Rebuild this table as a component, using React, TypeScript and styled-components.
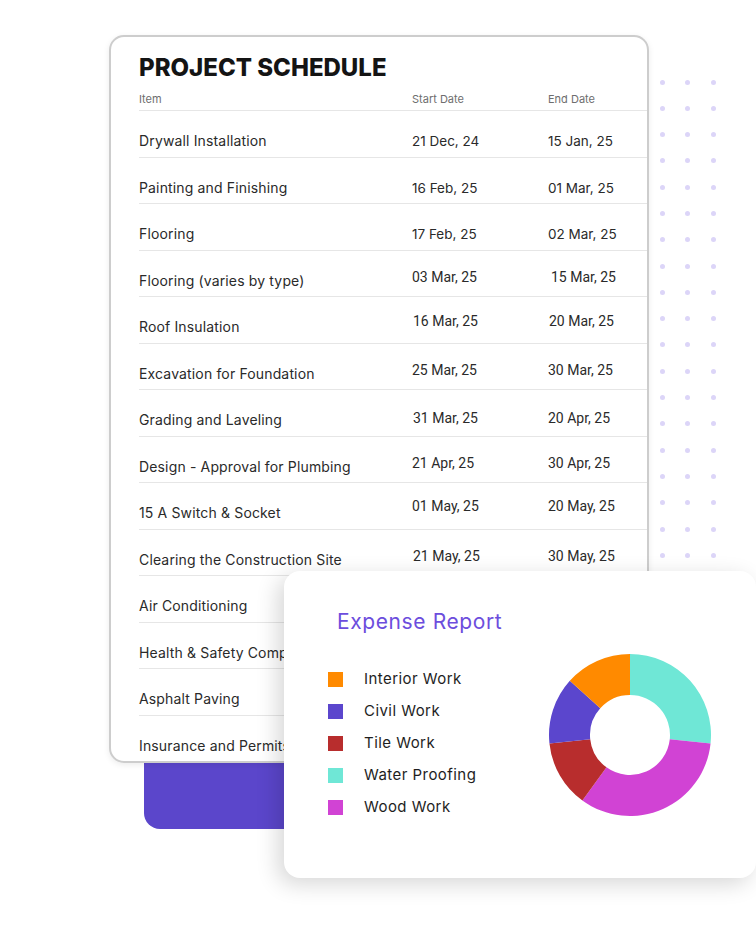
import React from 'react';
import styled, { createGlobalStyle } from 'styled-components';

const colors = {
   INK: '#141414',
   TEXT: '#2a2a2a',
   MUTED: '#6e6e6e',
   LINE: '#e6e6e6',
   BORDER: '#cdcdcd',
   DOT: '#dcd5f8',
   VIOLET: '#5b46cb',
   TITLE: '#6c4ddd',
};

type Row = {
   item: string;
   start: string;
   end: string;
   pasted?: boolean;
   lift?: number;
   startNudge?: number;
   endNudge?: number;
};

const rows: Row[] = [
   { item: 'Drywall Installation', start: '21 Dec, 24', end: '15 Jan, 25' },
   { item: 'Painting and Finishing', start: '16 Feb, 25', end: '01 Mar, 25' },
   { item: 'Flooring', start: '17 Feb, 25', end: '02 Mar, 25' },
   { item: 'Flooring (varies by type)', start: '03 Mar, 25', end: '15 Mar, 25', pasted: true, lift: 4, startNudge: -2, endNudge: 3 },
   { item: 'Roof Insulation', start: '16 Mar, 25', end: '20 Mar, 25', pasted: true, lift: 6, startNudge: 1, endNudge: 1 },
   { item: 'Excavation for Foundation', start: '25 Mar, 25', end: '30 Mar, 25', pasted: true, lift: 4, startNudge: -2, endNudge: -1 },
   { item: 'Grading and Laveling', start: '31 Mar, 25', end: '20 Apr, 25', pasted: true, lift: 2, startNudge: 1 },
   { item: 'Design - Approval for Plumbing', start: '21 Apr, 25', end: '30 Apr, 25', pasted: true, lift: 4 },
   { item: '15 A Switch & Socket', start: '01 May, 25', end: '20 May, 25', pasted: true, lift: 7, startNudge: -2, endNudge: -2 },
   { item: 'Clearing the Construction Site', start: '21 May, 25', end: '30 May, 25', pasted: true, lift: 4, startNudge: 1 },
   { item: 'Air Conditioning', start: '', end: '' },
   { item: 'Health & Safety Compliance', start: '', end: '' },
   { item: 'Asphalt Paving', start: '', end: '' },
   { item: 'Insurance and Permits', start: '', end: '' },
];

const expenses = [
   { label: 'Interior Work', color: '#ff8a00' },
   { label: 'Civil Work', color: '#5b46cd' },
   { label: 'Tile Work', color: '#b82d2d' },
   { label: 'Water Proofing', color: '#6fe7d6' },
   { label: 'Wood Work', color: '#d143d4' },
];

// clockwise from 12 o'clock, in 24 degree units
const slices = [
   { units: 4, color: '#6fe7d6' },
   { units: 5, color: '#d143d4' },
   { units: 2, color: '#b82d2d' },
   { units: 2, color: '#5b46cd' },
   { units: 2, color: '#ff8a00' },
];

const GlobalStyle = createGlobalStyle`
   html, body {
      margin: 0;
      padding: 0;
      background: #ffffff;
   }
   body {
      font-family: Inter, 'Liberation Sans', sans-serif;
      -webkit-font-smoothing: antialiased;
   }
   * {
      box-sizing: border-box;
   }
`;

const point = (c: number, rad: number, deg: number) => {
   const a = (deg * Math.PI) / 180;
   return [c + rad * Math.sin(a), c - rad * Math.cos(a)];
};

const slicePath = (c: number, R: number, r: number, a0: number, a1: number) => {
   const large = a1 - a0 > 180 ? 1 : 0;
   const [x0, y0] = point(c, R, a0);
   const [x1, y1] = point(c, R, a1);
   const [x2, y2] = point(c, r, a1);
   const [x3, y3] = point(c, r, a0);
   return `M${x0} ${y0} A${R} ${R} 0 ${large} 1 ${x1} ${y1} L${x2} ${y2} A${r} ${r} 0 ${large} 0 ${x3} ${y3} Z`;
};

const Donut = () => {
   let angle = 0;
   return (
      <svg width="164" height="164" viewBox="0 0 164 164">
         {slices.map((s, i) => {
            const a0 = angle;
            angle += s.units * 24;
            return <path key={i} d={slicePath(82, 81, 40, a0, angle)} fill={s.color} />;
         })}
      </svg>
   );
};

const App = () => {
   return (
      <>
         <GlobalStyle />
         <Stage>
            <Backdrop />
            <ScheduleCard>
               <Title>PROJECT SCHEDULE</Title>
               <HeadRow>
                  <HeadCell>Item</HeadCell>
                  <HeadCell>Start Date</HeadCell>
                  <HeadCell>End Date</HeadCell>
               </HeadRow>
               {rows.map((row, index) => (
                  <BodyRow key={index} $last={index === rows.length - 1}>
                     <ItemCell>{row.item}</ItemCell>
                     <DateCell $pasted={!!row.pasted} $lift={row.lift ?? 0} $nudge={row.startNudge ?? 0}>
                        {row.start}
                     </DateCell>
                     <DateCell $pasted={!!row.pasted} $lift={row.lift ?? 0} $nudge={row.endNudge ?? 0}>
                        {row.end}
                     </DateCell>
                  </BodyRow>
               ))}
            </ScheduleCard>
            <DotGrid>
               {Array.from({ length: 57 }).map((_, i) => (
                  <Dot key={i} />
               ))}
            </DotGrid>
            <ExpenseCard>
               <LegendColumn>
                  <ExpenseTitle>Expense Report</ExpenseTitle>
                  <Legend>
                     {expenses.map((e) => (
                        <LegendItem key={e.label}>
                           <Swatch $color={e.color} />
                           <LegendLabel>{e.label}</LegendLabel>
                        </LegendItem>
                     ))}
                  </Legend>
               </LegendColumn>
               <ChartWrap>
                  <Donut />
               </ChartWrap>
            </ExpenseCard>
         </Stage>
      </>
   );
};

const Stage = styled.div`
   position: relative;
   width: 756px;
   height: 938px;
   overflow: hidden;
   display: flex;
   align-items: flex-start;
   padding: 35px 0 0 109px;
`;

const Backdrop = styled.div`
   position: absolute;
   left: 144px;
   top: 660px;
   width: 300px;
   height: 169px;
   border-radius: 16px;
   background: ${colors.VIOLET};
   z-index: 0;
`;

const ScheduleCard = styled.div`
   position: relative;
   z-index: 1;
   width: 540px;
   height: 728px;
   flex-shrink: 0;
   overflow: hidden;
   background: #ffffff;
   border: 2px solid ${colors.BORDER};
   border-radius: 15px;
   box-shadow: 0 2px 6px rgba(0, 0, 0, 0.08);
   padding: 19px 0 0 28px;
`;

const Title = styled.h1`
   margin: 0;
   font-size: 24px;
   line-height: 24px;
   font-weight: 800;
   color: ${colors.INK};
`;

const HeadRow = styled.div`
   display: grid;
   grid-template-columns: 273px 136px 1fr;
   align-items: end;
   height: 31px;
   padding-bottom: 4px;
   border-bottom: 1px solid ${colors.LINE};
`;

const HeadCell = styled.span`
   font-size: 11px;
   line-height: 14px;
   color: ${colors.MUTED};
`;

const BodyRow = styled.div<{ $last: boolean }>`
   display: grid;
   grid-template-columns: 273px 136px 1fr;
   align-items: start;
   height: 46.5px;
   padding-top: 21px;
   border-bottom: 1px solid ${({ $last }) => ($last ? 'transparent' : colors.LINE)};
`;

const ItemCell = styled.span`
   font-size: 14px;
   line-height: 18px;
   letter-spacing: 0.15px;
   color: ${colors.TEXT};
   white-space: nowrap;
`;

const DateCell = styled.span<{ $pasted: boolean; $lift: number; $nudge: number }>`
   font-family: ${({ $pasted }) => ($pasted ? "Roboto, 'Liberation Sans', sans-serif" : 'inherit')};
   font-size: ${({ $pasted }) => ($pasted ? '14px' : '13.5px')};
   line-height: 18px;
   color: ${colors.TEXT};
   white-space: nowrap;
   margin-top: ${({ $lift }) => -$lift}px;
   padding-left: ${({ $nudge }) => $nudge}px;
`;

const DotGrid = styled.div`
   display: grid;
   grid-template-columns: repeat(3, 5px);
   grid-auto-rows: 5px;
   column-gap: 20.5px;
   row-gap: 21.3px;
   margin: 44.5px 0 0 10.5px;
`;

const Dot = styled.span`
   width: 5px;
   height: 5px;
   border-radius: 50%;
   background: ${colors.DOT};
`;

const ExpenseCard = styled.div`
   position: absolute;
   z-index: 2;
   left: 284px;
   top: 571px;
   width: 472px;
   height: 307px;
   background: #ffffff;
   border-radius: 16px;
   box-shadow: -6px 6px 22px rgba(0, 0, 0, 0.16);
   display: flex;
   align-items: flex-start;
`;

const LegendColumn = styled.div`
   width: 264px;
   padding: 39px 0 0 44px;
`;

const ExpenseTitle = styled.h2`
   margin: 0 0 0 9px;
   font-size: 21px;
   line-height: 24px;
   font-weight: 400;
   letter-spacing: 0.6px;
   color: ${colors.TITLE};
`;

const Legend = styled.ul`
   list-style: none;
   margin: 29px 0 0;
   padding: 0;
`;

const LegendItem = styled.li`
   display: flex;
   align-items: center;
   gap: 21px;
   height: 32px;
`;

const Swatch = styled.span<{ $color: string }>`
   width: 15px;
   height: 15px;
   flex-shrink: 0;
   background: ${({ $color }) => $color};
`;

const LegendLabel = styled.span`
   font-size: 15px;
   line-height: 20px;
   letter-spacing: 0.45px;
   color: #1e1e1e;
`;

const ChartWrap = styled.div`
   margin-top: 82px;
   line-height: 0;
`;

export default App;
